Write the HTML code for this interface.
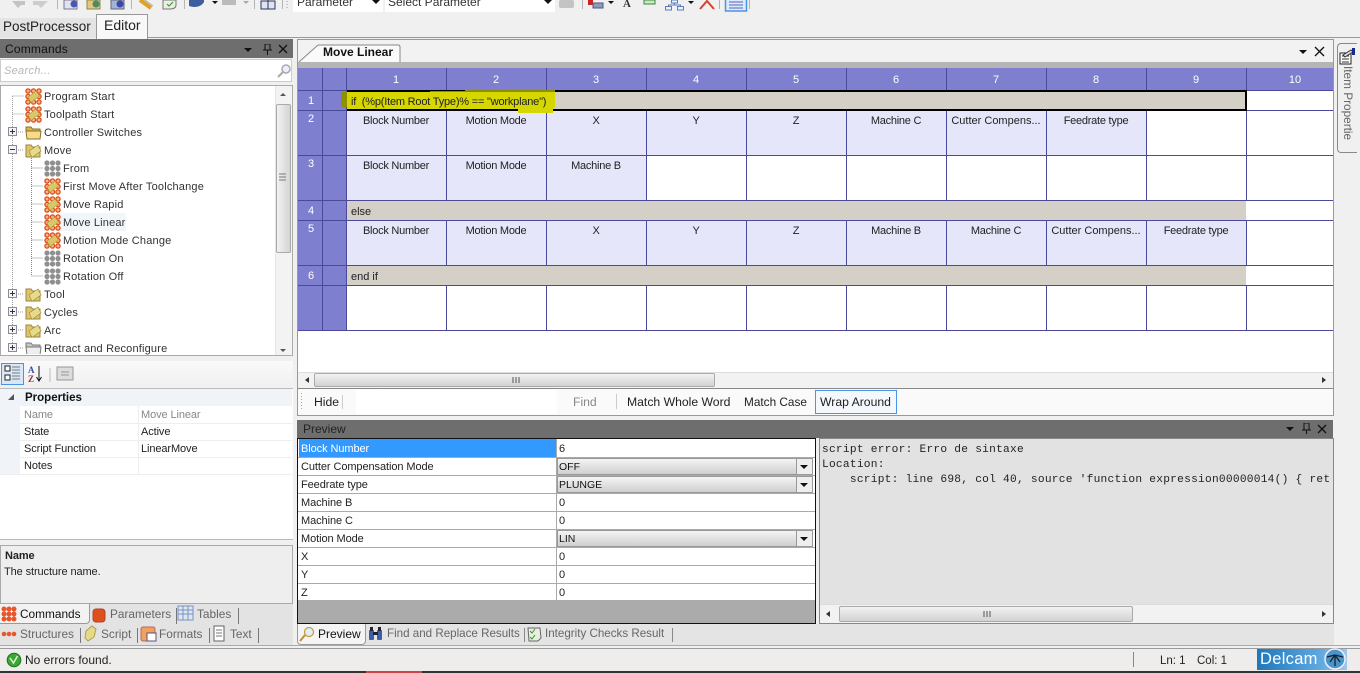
<!DOCTYPE html>
<html><head><meta charset="utf-8"><title>PostProcessor Editor</title>
<style>
html,body{margin:0;padding:0}
body{width:1360px;height:673px;overflow:hidden;position:relative;background:#f0f0f0;font:12px "Liberation Sans",sans-serif;color:#111}
div,span.a,svg.a{position:absolute;box-sizing:border-box}
.t{white-space:nowrap;line-height:16px;height:16px}
.cell{position:absolute;box-sizing:border-box;text-align:center;white-space:nowrap;overflow:hidden;line-height:16px;padding-top:3px;font-size:11px;letter-spacing:-.25px;color:#222;margin-left:-1px}
.h{color:#fff;text-align:center;line-height:16px;font-size:11px;margin-left:-1px}
.rn{color:#fff;text-align:center;line-height:16px;font-size:11px;left:299px;width:24px}
.tr{font-size:11px;color:#333;white-space:nowrap;line-height:16px;height:16px;letter-spacing:.18px;margin-top:1px}
.p{font-size:11px;white-space:nowrap;line-height:16px;height:16px;color:#222;margin-top:1px;letter-spacing:-.1px}
.pt{font-size:11px;white-space:nowrap;line-height:16px;height:16px;color:#222;margin-top:1px;letter-spacing:-.08px}
.combo{background:linear-gradient(#f4f4f4,#cfcfcf);border:1px solid #999;height:17px;left:557px;width:256px;font-size:10.5px;line-height:16px;padding-left:1px}
.combo b{position:absolute;right:0;top:0;width:15px;height:15px;background:#eee;border-left:1px solid #999}
.combo b:after{content:"";position:absolute;left:3px;top:6px;border:4px solid transparent;border-top:4px solid #111;border-bottom:0}
.ln{background:#aaa;height:1px}
.m{font:11.2px "Liberation Mono",monospace;white-space:pre;line-height:15px;color:#222;letter-spacing:.25px}
.tab{font-size:11.85px;color:#666;white-space:nowrap;line-height:16px;height:16px}
.sep{width:1px;background:#888}
</style></head><body>
<svg width="0" height="0" style="position:absolute">
<defs>
<g id="gr"><g fill="#8f8f8f"><circle cx="3" cy="3" r="2.600"/><circle cx="8.500" cy="3" r="2.600"/><circle cx="14" cy="3" r="2.600"/><circle cx="3" cy="8.500" r="2.600"/><circle cx="8.500" cy="8.500" r="2.600"/><circle cx="14" cy="8.500" r="2.600"/><circle cx="3" cy="14" r="2.600"/><circle cx="8.500" cy="14" r="2.600"/><circle cx="14" cy="14" r="2.600"/></g></g>
<g id="or"><g fill="#f3b48e" stroke="#df4f18" stroke-width="1.300"><circle cx="3" cy="3" r="2.100"/><circle cx="8.500" cy="3" r="2.100"/><circle cx="14" cy="3" r="2.100"/><circle cx="3" cy="8.500" r="2.100"/><circle cx="14" cy="8.500" r="2.100"/><circle cx="3" cy="14" r="2.100"/><circle cx="8.500" cy="14" r="2.100"/><circle cx="14" cy="14" r="2.100"/></g><path d="M3 9 L11 3 L14.500 8 L6 14.500Z" fill="#d8c86a" stroke="#a89a40" stroke-width=".6"/></g>
<g id="fo"><path d="M1 3h5l1.500 2h7.500v10H1Z" fill="#e0c468" stroke="#9a8440"/><path d="M4 9 L13 3 L16 9 L7 15.500Z" fill="#e6da8c" stroke="#a08c32" stroke-width=".7"/></g>
<g id="fy"><path d="M1 3h5l1.500 2h7.500v2H1Z" fill="#d9b24a" stroke="#8a7030"/><path d="M1 7h15l-1 8H2Z" fill="#f5dc88" stroke="#8a7030"/></g>
<g id="fg"><path d="M1 3h5l1.500 2h7.500v2H1Z" fill="#c8c8c8" stroke="#777"/><path d="M1 7h15l-1 8H2Z" fill="#eee" stroke="#777"/></g>
<g id="pl"><rect x=".5" y=".5" width="8" height="8" fill="#f4f4f4" stroke="#8a8a9a"/><path d="M2 4.500h5M4.500 2v5" stroke="#334" fill="none"/></g>
<g id="mi"><rect x=".5" y=".5" width="8" height="8" fill="#f4f4f4" stroke="#8a8a9a"/><path d="M2 4.500h5" stroke="#334" fill="none"/></g>
<g id="ctl"><path d="M0 0h8l-4 4z" fill="#111"/><path d="M21 -4h5v6h-5zM19 2h9M23.500 2v5" fill="none" stroke="#111"/><path d="M35 -3l8 8M43 -3l-8 8" stroke="#111" stroke-width="1.300"/></g>
</defs></svg>

<!-- top toolbar -->
<svg class="a" style="left:0;top:0" width="820" height="14">
<path d="M12 1h13v4h-4l-3 3z" fill="#c4c4c4"/><path d="M48 1H33v4h5l3 3z" fill="#cdcdcd"/>
<path d="M57.500 0v9M131.500 0v9M184.500 0v9M254.500 0v9M282.500 0v9" stroke="#b5b5b5"/>
<rect x="64" y="0" width="13" height="9" fill="#dfe3f0" stroke="#778"/><circle cx="74" cy="4" r="3.500" fill="#4a56b8"/>
<rect x="87" y="0" width="13" height="9" fill="#e2c878" stroke="#885"/><circle cx="96" cy="4" r="3.500" fill="#4a8a68"/>
<rect x="111" y="0" width="13" height="9" fill="#a4b4d8" stroke="#667"/><circle cx="120" cy="4" r="3.500" fill="#3a48a8"/>
<path d="M140 0l11 8" stroke="#e0a020" stroke-width="4"/><path d="M140 0l11 8" stroke="#aaa" stroke-width="1" transform="translate(2,-2)"/>
<path d="M163 0h13v5c0 3-3 4-6 4h-7z" fill="#e8eee0" stroke="#777"/><path d="M167 4l2 2 4-4" stroke="#2a9a2a" fill="none"/>
<path d="M189 0h15v2c-3 5-9 6-15 4z" fill="#3a5f9c"/><path d="M212 1h6l-3 3z" fill="#111"/><rect x="222" y="0" width="14" height="5" fill="#bbb"/><path d="M243 1h6l-3 3z" fill="#aaa"/>
<rect x="261" y="1" width="14" height="8" fill="#dde4f4" stroke="#335"/><path d="M268 0v9" stroke="#335"/>
<path d="M287 1v8" stroke="#999" stroke-dasharray="1 2"/>
<rect x="559" y="0" width="15" height="8" rx="2" fill="#c4c4c4"/><path d="M582.500 0v9M719.500 0v9M749.500 0v9" stroke="#b5b5b5"/>
<path d="M588 0h5v5h-5z" fill="#c22"/><rect x="593" y="3" width="10" height="5" fill="#8a9ac0" stroke="#557"/><path d="M608 1h6l-3 3z" fill="#111"/>
<text x="623" y="7" font-size="11" font-weight="bold" font-family="Liberation Serif" fill="#333">A</text>
<rect x="644" y="0" width="11" height="4" fill="#cfe6c8" stroke="#3a8a3a"/>
<path d="M665.500 6.500h6v3.500h-6zM677.500 6.500h6v3.500h-6zM671.500 0h6v3h-6zM674.500 3v2M668.500 6v-1h12v1" fill="none" stroke="#5a7ec0"/><path d="M688 1h6l-3 3z" fill="#111"/>
<path d="M700 9l7-8 7 8" fill="none" stroke="#d8412c" stroke-width="2"/>
<rect x="725.500" y="-2" width="21" height="13" fill="#dcebfb" stroke="#4a94e8" stroke-width="1.500"/><path d="M729 2h14M729 5h14M729 8h14" stroke="#5a62b8"/>
</svg>
<div style="left:293px;top:0;width:90px;height:12px;background:#fff"></div>
<div style="left:385px;top:0;width:170px;height:12px;background:#fff"></div>
<div class="t" style="left:297px;top:-6px;font-size:12px;color:#333">Parameter</div>
<div class="t" style="left:388px;top:-6px;font-size:12px;color:#333">Select Parameter</div>
<svg class="a" style="left:372px;top:0" width="180" height="6"><path d="M0 0h8l-4 4zM172 0h8l-4 4z" fill="#111"/></svg>

<!-- app tabs -->
<div style="left:0;top:37px;width:1360px;height:1px;background:#999"></div>
<div style="left:0;top:18px;width:97px;height:20px;background:#e4e4e4"></div>
<div class="t" style="left:3px;top:19px;font-size:13.500px;color:#222">PostProcessor</div>
<div style="left:96px;top:14px;width:52px;height:25px;background:#f8f8f8;border:1px solid #999;border-bottom:0"></div>
<div class="t" style="left:104px;top:17px;font-size:14px;color:#222">Editor</div>

<!-- Commands panel -->
<div style="left:0;top:39px;width:293px;height:19px;background:#6e6e6e"></div>
<div class="t" style="left:5px;top:41px;font-size:12px;color:#111;letter-spacing:.2px">Commands</div>
<svg class="a" style="left:244px;top:44px" width="50" height="12"><use href="#ctl" y="4"/></svg>
<div style="left:0;top:59px;width:292px;height:23px;background:#fff;border:1px solid #ccc"></div>
<div class="t" style="left:4px;top:63px;font-size:11px;font-style:italic;color:#b5b5b5;letter-spacing:.3px">Search...</div>
<svg class="a" style="left:276px;top:63px" width="16" height="16"><circle cx="10" cy="6" r="4" fill="#eef" stroke="#aaa" stroke-width="1.500"/><path d="M7 9l-5 5" stroke="#aaa" stroke-width="2"/></svg>
<div style="left:0;top:85px;width:293px;height:271px;background:#fff;border:1px solid #aaa"></div>
<svg class="a" style="left:0;top:86px" width="64" height="268">
<path d="M12.500 10v252M12.500 10h12M12.500 28h12M18 46h6M18 64h6M18 208h6M18 226h6M18 244h6M18 262h6" stroke="#999" stroke-dasharray="1 1" fill="none"/>
<path d="M31.500 72v118M31.500 82h12M31.500 100h12M31.500 118h12M31.500 136h12M31.500 154h12M31.500 172h12M31.500 190h12" stroke="#888" stroke-dasharray="1 1" fill="none"/>
<use href="#or" x="25" y="2"/><use href="#or" x="25" y="20"/>
<use href="#fy" x="25" y="38"/><use href="#pl" x="8" y="41"/>
<use href="#fo" x="25" y="56"/><use href="#mi" x="8" y="59"/>
<use href="#gr" x="44" y="74"/><use href="#or" x="44" y="92"/><use href="#or" x="44" y="110"/><use href="#or" x="44" y="128"/><use href="#or" x="44" y="146"/><use href="#gr" x="44" y="164"/><use href="#gr" x="44" y="182"/>
<use href="#fo" x="25" y="200"/><use href="#pl" x="8" y="203"/>
<use href="#fo" x="25" y="218"/><use href="#pl" x="8" y="221"/>
<use href="#fo" x="25" y="236"/><use href="#pl" x="8" y="239"/>
<use href="#fg" x="25" y="254"/><use href="#pl" x="8" y="257"/>
</svg>
<div style="left:61px;top:213px;width:65px;height:18px;background:#f1f6fb"></div>
<div class="tr" style="left:44px;top:88px">Program Start</div>
<div class="tr" style="left:44px;top:106px">Toolpath Start</div>
<div class="tr" style="left:44px;top:124px">Controller Switches</div>
<div class="tr" style="left:44px;top:142px">Move</div>
<div class="tr" style="left:63px;top:160px">From</div>
<div class="tr" style="left:63px;top:178px">First Move After Toolchange</div>
<div class="tr" style="left:63px;top:196px">Move Rapid</div>
<div class="tr" style="left:63px;top:214px">Move Linear</div>
<div class="tr" style="left:63px;top:232px">Motion Mode Change</div>
<div class="tr" style="left:63px;top:250px">Rotation On</div>
<div class="tr" style="left:63px;top:268px">Rotation Off</div>
<div class="tr" style="left:44px;top:286px">Tool</div>
<div class="tr" style="left:44px;top:304px">Cycles</div>
<div class="tr" style="left:44px;top:322px">Arc</div>
<div class="tr" style="left:44px;top:340px">Retract and Reconfigure</div>
<div style="left:275px;top:86px;width:17px;height:269px;background:#f3f3f3;border-left:1px solid #e4e4e4"></div>
<div style="left:276px;top:104px;width:15px;height:149px;background:linear-gradient(90deg,#f2f2f2,#d4d4d4);border:1px solid #aaa;border-radius:2px"></div>
<svg class="a" style="left:278px;top:92px" width="12" height="262"><path d="M2 4l3-3 3 3z" fill="#555"/><path d="M2 257l3 3 3-3z" fill="#555"/><path d="M1 82h7M1 85h7M1 88h7" stroke="#777"/></svg>

<!-- property toolbar -->
<div style="left:0;top:361px;width:293px;height:27px;background:linear-gradient(#fafafa,#efefef)"></div>
<div style="left:1px;top:363px;width:23px;height:22px;background:#d8e8f8;border:1px solid #4a94e8"></div>
<svg class="a" style="left:3px;top:364px" width="76" height="20">
<rect x="2" y="2" width="5" height="5" fill="#fff" stroke="#222"/><rect x="2" y="11" width="5" height="5" fill="#fff" stroke="#222"/><path d="M9 3h8M9 6h8M9 9h8M9 12h8M9 15h8" stroke="#777"/>
<text x="25" y="9" font-size="9" font-weight="bold" fill="#3552a8" font-family="Liberation Serif">A</text><text x="25" y="18" font-size="9" font-weight="bold" fill="#9e2c2c" font-family="Liberation Serif">Z</text><path d="M36 2v14M33.500 13l2.500 4 2.500-4" stroke="#111" fill="none"/>
<path d="M47 4v14" stroke="#bbb"/><rect x="54" y="3" width="16" height="13" fill="#dcdcdc" stroke="#999"/><path d="M58 8h8M58 11h8" stroke="#999"/>
</svg>
<div style="left:0;top:388px;width:293px;height:152px;background:#fff;border:1px solid #bbb;border-width:1px 0 1px 0"></div>
<div style="left:0;top:389px;width:292px;height:17px;background:#f0f4f8"></div>
<div style="left:0;top:389px;width:20px;height:85px;background:#f0f4f8"></div>
<svg class="a" style="left:8px;top:393px" width="8" height="8"><path d="M6 1v6H0z" fill="#555"/></svg>
<div class="p" style="left:25px;top:389px;font-weight:bold;color:#111;font-size:11.500px;letter-spacing:0">Properties</div>
<div class="ln" style="left:20px;top:423px;width:272px;background:#eee"></div>
<div class="ln" style="left:20px;top:440px;width:272px;background:#eee"></div>
<div class="ln" style="left:20px;top:457px;width:272px;background:#eee"></div>
<div class="ln" style="left:0;top:474px;width:292px;background:#eee"></div>
<div style="left:138px;top:406px;width:1px;height:68px;background:#eee"></div>
<div class="p" style="left:24px;top:406px;color:#888">Name</div><div class="p" style="left:141px;top:406px;color:#888">Move Linear</div>
<div class="p" style="left:24px;top:423px">State</div><div class="p" style="left:141px;top:423px">Active</div>
<div class="p" style="left:24px;top:440px">Script Function</div><div class="p" style="left:141px;top:440px">LinearMove</div>
<div class="p" style="left:24px;top:457px">Notes</div>

<div style="left:0;top:545px;width:293px;height:59px;background:#eee;border:1px solid #aaa"></div>
<div class="p" style="left:5px;top:547px;font-weight:bold">Name</div>
<div class="p" style="left:4px;top:563px">The structure name.</div>

<!-- left tabs -->
<div style="left:0;top:604px;width:293px;height:41px;background:#e3e3e3"></div>
<div style="left:0;top:604px;width:90px;height:20px;background:#f2f2f2;border:1px solid #999;border-width:0 1px 1px 0;border-radius:0 0 4px 0"></div>
<svg class="a" style="left:0;top:604px" width="293" height="41">
<g fill="#e8562a" transform="translate(1,2)"><circle cx="3" cy="3" r="2.500"/><circle cx="8" cy="3" r="2.500"/><circle cx="13" cy="3" r="2.500"/><circle cx="3" cy="8" r="2.500"/><circle cx="8" cy="8" r="2.500"/><circle cx="13" cy="8" r="2.500"/><circle cx="3" cy="13" r="2.500"/><circle cx="8" cy="13" r="2.500"/><circle cx="13" cy="13" r="2.500"/></g>
<rect x="93" y="5" width="12" height="13" rx="3" fill="#e0501c" stroke="#a43"/>
<rect x="178" y="2" width="15" height="14" fill="#dfe6f2" stroke="#7a92c4"/><path d="M178 6h15M178 10h15M183 2v14M188 2v14" stroke="#7a92c4"/>
<path d="M176.500 4v16M238.500 4v16" stroke="#777"/>
<g fill="#e8562a"><circle cx="4" cy="30" r="2.300"/><circle cx="9" cy="30" r="2.300"/><circle cx="14" cy="30" r="2.300"/></g>
<path d="M86 27l6-5 4 3-2 8-6 4-3-3z" fill="#e4d98c" stroke="#b0a040"/>
<rect x="141" y="23" width="14" height="14" rx="2" fill="#f0a060" stroke="#b66"/><rect x="147" y="29" width="9" height="8" fill="#fff" stroke="#557"/>
<rect x="214" y="22" width="10" height="15" fill="#fff" stroke="#666"/><path d="M216 26h6M216 29h6M216 32h6" stroke="#777"/>
<path d="M80.500 24v15M137.500 24v15M209.500 24v15M258.500 24v15" stroke="#777"/>
</svg>
<div class="tab" style="left:20px;top:606px;color:#111">Commands</div>
<div class="tab" style="left:110px;top:606px">Parameters</div>
<div class="tab" style="left:197px;top:606px">Tables</div>
<div class="tab" style="left:20px;top:626px">Structures</div>
<div class="tab" style="left:101px;top:626px">Script</div>
<div class="tab" style="left:159px;top:626px">Formats</div>
<div class="tab" style="left:230px;top:626px">Text</div>

<!-- main editor -->
<div style="left:297px;top:39px;width:1037px;height:377px;background:#f2f2f2;border:1px solid #999"></div>
<svg class="a" style="left:298px;top:44px" width="104" height="20"><path d="M1 18L20 1H100Q102 1 102 3V18" fill="#fafafa" stroke="#888"/></svg>
<div class="t" style="left:323px;top:44px;font-weight:bold;font-size:12px;color:#111">Move Linear</div>
<svg class="a" style="left:1299px;top:46px" width="30" height="12"><path d="M0 4h8l-4 4z" fill="#111"/><path d="M16 1l9 9M25 1l-9 9" stroke="#111" stroke-width="1.300"/></svg>
<div style="left:298px;top:62px;width:1035px;height:6px;background:#b5b5b5"></div>
<div style="left:298px;top:68px;width:1035px;height:304px;background:#fff"></div>
<!-- grid headers -->
<div style="left:298px;top:68px;width:1035px;height:23px;background:#7f7fcf"></div>
<div style="left:298px;top:68px;width:49px;height:262px;background:#7f7fcf"></div>
<!-- data cell bg -->
<div style="left:347px;top:110px;width:799px;height:45px;background:#e6e6fb"></div>
<div style="left:347px;top:155px;width:299px;height:45px;background:#e6e6fb"></div>
<div style="left:347px;top:220px;width:899px;height:45px;background:#e6e6fb"></div>
<div style="left:347px;top:200px;width:899px;height:20px;background:#d4d0c8"></div>
<div style="left:347px;top:265px;width:899px;height:20px;background:#d4d0c8"></div>
<div style="left:347px;top:91px;width:899px;height:19px;background:#d4d0c8"></div>
<svg class="a" style="left:298px;top:68px" width="1035" height="263">
<g stroke="#4a4a9c" fill="none">
<path d="M0 22.500H1035M0 42.500H1035M0 87.500H1035M0 132.500H1035M0 152.500H1035M0 197.500H1035M0 217.500H1035M0 262.500H1035"/>
<path d="M24.500 0V263M48.500 0V263M148.500 0V23M248.500 0V23M348.500 0V23M448.500 0V23M548.500 0V23M648.500 0V23M748.500 0V23M848.500 0V23M948.500 0V23"/>
<path d="M148.500 43V133M248.500 43V133M348.500 43V133M448.500 43V133M548.500 43V133M648.500 43V133M748.500 43V133M848.500 43V133M948.500 43V133"/>
<path d="M148.500 153V198M248.500 153V198M348.500 153V198M448.500 153V198M548.500 153V198M648.500 153V198M748.500 153V198M848.500 153V198M948.500 153V198"/>
<path d="M148.500 218V263M248.500 218V263M348.500 218V263M448.500 218V263M548.500 218V263M648.500 218V263M748.500 218V263M848.500 218V263M948.500 218V263"/>
</g>
<rect x="50" y="23" width="898" height="19" fill="none" stroke="#000" stroke-width="2"/>
</svg>
<!-- highlight -->
<svg class="a" style="left:341px;top:88px" width="220" height="28">
<path d="M0 4H6V19H0ZM89 3H124V2H214V5H89Z" fill="#8f8f00"/>
<path d="M6 4H214V19L212 21V25H177V21H6Z" fill="#d6d600"/>
</svg>
<div class="h" style="left:347px;top:72px;width:100px">1</div><div class="h" style="left:447px;top:72px;width:100px">2</div><div class="h" style="left:547px;top:72px;width:100px">3</div><div class="h" style="left:647px;top:72px;width:100px">4</div><div class="h" style="left:747px;top:72px;width:100px">5</div><div class="h" style="left:847px;top:72px;width:100px">6</div><div class="h" style="left:947px;top:72px;width:100px">7</div><div class="h" style="left:1047px;top:72px;width:100px">8</div><div class="h" style="left:1147px;top:72px;width:100px">9</div><div class="h" style="left:1247px;top:72px;width:98px">10</div>
<div class="rn" style="top:93px">1</div><div class="rn" style="top:111px">2</div><div class="rn" style="top:156px">3</div><div class="rn" style="top:203px">4</div><div class="rn" style="top:221px">5</div><div class="rn" style="top:268px">6</div>
<div class="t" style="left:351px;top:94px;font-size:11px;letter-spacing:-.2px;color:#222">if&nbsp; (%p(Item Root Type)% == "workplane")</div>
<div class="t" style="left:351px;top:204px;font-size:11px;color:#222">else</div>
<div class="t" style="left:351px;top:269px;font-size:11px;color:#222">end if</div>

<div class="cell" style="left:347px;top:110px;width:100px">Block Number</div><div class="cell" style="left:447px;top:110px;width:100px">Motion Mode</div><div class="cell" style="left:547px;top:110px;width:100px">X</div><div class="cell" style="left:647px;top:110px;width:100px">Y</div><div class="cell" style="left:747px;top:110px;width:100px">Z</div><div class="cell" style="left:847px;top:110px;width:100px">Machine C</div><div class="cell" style="left:947px;top:110px;width:100px;letter-spacing:0">Cutter Compens...</div><div class="cell" style="left:1047px;top:110px;width:100px">Feedrate type</div>
<div class="cell" style="left:347px;top:155px;width:100px">Block Number</div><div class="cell" style="left:447px;top:155px;width:100px">Motion Mode</div><div class="cell" style="left:547px;top:155px;width:100px">Machine B</div>
<div class="cell" style="left:347px;top:220px;width:100px">Block Number</div><div class="cell" style="left:447px;top:220px;width:100px">Motion Mode</div><div class="cell" style="left:547px;top:220px;width:100px">X</div><div class="cell" style="left:647px;top:220px;width:100px">Y</div><div class="cell" style="left:747px;top:220px;width:100px">Z</div><div class="cell" style="left:847px;top:220px;width:100px">Machine B</div><div class="cell" style="left:947px;top:220px;width:100px">Machine C</div><div class="cell" style="left:1047px;top:220px;width:100px;letter-spacing:0">Cutter Compens...</div><div class="cell" style="left:1147px;top:220px;width:100px">Feedrate type</div>

<!-- editor h-scroll -->
<div style="left:298px;top:372px;width:1035px;height:17px;background:#f2f2f2;border-top:1px solid #ddd;border-bottom:1px solid #888"></div>
<div style="left:314px;top:373px;width:401px;height:14px;background:linear-gradient(#f2f2f2,#d2d2d2);border:1px solid #aaa;border-radius:2px"></div>
<svg class="a" style="left:303px;top:376px" width="1025" height="9"><path d="M6 1v6L2 4z" fill="#333"/><path d="M1019 1v6l4-3z" fill="#333"/><path d="M210 1v6M213 1v6M216 1v6" stroke="#555"/></svg>
<!-- find bar -->
<div style="left:298px;top:389px;width:1035px;height:26px;background:#fafafa"></div>
<div style="left:356px;top:390px;width:201px;height:24px;background:#fff"></div>
<svg class="a" style="left:300px;top:392px" width="4" height="20"><path d="M1.500 1v18" stroke="#aaa" stroke-dasharray="1 2"/></svg>
<div class="sep" style="left:342px;top:395px;height:14px;background:#ccc"></div>
<div class="t" style="left:314px;top:394px;font-size:12.200px;color:#222">Hide</div>
<div class="t" style="left:573px;top:394px;font-size:12.200px;color:#888">Find</div>
<div class="sep" style="left:616px;top:394px;height:15px;background:#ccc"></div>
<div class="t" style="left:627px;top:394px;font-size:12.200px;color:#222">Match Whole Word</div>
<div class="t" style="left:744px;top:394px;font-size:11.800px;color:#222">Match Case</div>
<div style="left:815px;top:390px;width:82px;height:24px;background:#f4f8fc;border:1px solid #4a94e8"></div>
<div class="t" style="left:820px;top:394px;font-size:12.200px;color:#222">Wrap Around</div>

<!-- preview panel -->
<div style="left:297px;top:420px;width:1036px;height:18px;background:#6e6e6e"></div>
<div class="t" style="left:303px;top:421px;font-size:12px;color:#222">Preview</div>
<svg class="a" style="left:1285px;top:423px" width="48" height="12"><path d="M1 4h8l-4 4z" fill="#111"/><path d="M19 0h5v7h-5zM17 7h9M21.500 7v4" fill="none" stroke="#111"/><path d="M33 2l8 8M41 2l-8 8" stroke="#111" stroke-width="1.300"/></svg>
<div style="left:297px;top:438px;width:519px;height:186px;background:#ababab;border:1px solid #111;border-top-width:1px"></div>
<div style="left:298px;top:439px;width:517px;height:162px;background:#fff"></div>
<div style="left:299px;top:439px;width:257px;height:18px;background:#3399ff"></div>
<div class="ln" style="left:298px;top:457px;width:517px"></div><div class="ln" style="left:298px;top:475px;width:517px"></div><div class="ln" style="left:298px;top:493px;width:517px"></div><div class="ln" style="left:298px;top:511px;width:517px"></div><div class="ln" style="left:298px;top:529px;width:517px"></div><div class="ln" style="left:298px;top:547px;width:517px"></div><div class="ln" style="left:298px;top:565px;width:517px"></div><div class="ln" style="left:298px;top:583px;width:517px"></div><div class="ln" style="left:298px;top:600px;width:517px"></div>
<div style="left:556px;top:439px;width:1px;height:162px;background:#aaa"></div>
<div class="pt" style="left:301px;top:440px;color:#fff">Block Number</div><div class="pt" style="left:559px;top:440px">6</div>
<div class="pt" style="left:301px;top:458px">Cutter Compensation Mode</div><div class="combo" style="top:458px">OFF<b></b></div>
<div class="pt" style="left:301px;top:476px">Feedrate type</div><div class="combo" style="top:476px">PLUNGE<b></b></div>
<div class="pt" style="left:301px;top:494px">Machine B</div><div class="pt" style="left:559px;top:494px">0</div>
<div class="pt" style="left:301px;top:512px">Machine C</div><div class="pt" style="left:559px;top:512px">0</div>
<div class="pt" style="left:301px;top:530px">Motion Mode</div><div class="combo" style="top:530px">LIN<b></b></div>
<div class="pt" style="left:301px;top:548px">X</div><div class="pt" style="left:559px;top:548px">0</div>
<div class="pt" style="left:301px;top:566px">Y</div><div class="pt" style="left:559px;top:566px">0</div>
<div class="pt" style="left:301px;top:584px">Z</div><div class="pt" style="left:559px;top:584px">0</div>

<!-- output text -->
<div style="left:819px;top:438px;width:515px;height:186px;background:#e2e2e2;border:1px solid #888;overflow:hidden"></div>
<div class="m" style="left:822px;top:443px;width:511px;overflow:hidden">script error: Erro de sintaxe
Location:
    script: line 698, col 40, source 'function expression00000014() { ret</div>
<div style="left:820px;top:604px;width:513px;height:19px;background:#f2f2f2;border-top:1px solid #ddd"></div>
<div style="left:839px;top:606px;width:294px;height:16px;background:linear-gradient(#f2f2f2,#d2d2d2);border:1px solid #aaa;border-radius:2px"></div>
<svg class="a" style="left:825px;top:610px" width="505" height="9"><path d="M5 1v6L1 4z" fill="#333"/><path d="M497 1v6l4-3z" fill="#333"/><path d="M159 1v6M162 1v6M165 1v6" stroke="#555"/></svg>

<!-- bottom tabs right -->
<div style="left:297px;top:624px;width:1037px;height:22px;background:#e4e4e4"></div>
<div style="left:297px;top:624px;width:69px;height:21px;background:#f4f4f4;border:1px solid #999;border-top:0;border-radius:0 0 4px 4px"></div>
<svg class="a" style="left:298px;top:625px" width="380" height="20">
<circle cx="11" cy="7" r="4.500" fill="#def" stroke="#c8a040" stroke-width="1.300"/><path d="M7 10L2 16" stroke="#c8902a" stroke-width="2"/>
<rect x="71" y="5" width="5" height="10" rx="1" fill="#3a5fa8"/><rect x="79" y="5" width="5" height="10" rx="1" fill="#3a5fa8"/><rect x="72" y="2" width="3" height="4" fill="#223"/><rect x="80" y="2" width="3" height="4" fill="#223"/><rect x="75" y="7" width="5" height="3" fill="#222"/>
<path d="M230 3h12l1 10-3 3h-9z" fill="#e8eee0" stroke="#666"/><path d="M232 6l2 2 3-4M232 12l2 2 3-4" stroke="#2a9a2a" fill="none"/>
<path d="M226.500 3v14M374.500 3v14" stroke="#888"/>
</svg>
<div class="tab" style="left:318px;top:626px;color:#111;font-size:12px">Preview</div>
<div class="tab" style="left:387px;top:626px;font-size:11.600px">Find and Replace Results</div>
<div class="tab" style="left:545px;top:626px;font-size:11.600px">Integrity Checks Result</div>

<!-- item props tab -->
<div style="left:1337px;top:43px;width:20px;height:110px;background:#f0f0f0;border:1px solid #888;border-right:0;border-radius:4px 0 0 4px"></div>
<svg class="a" style="left:1339px;top:47px" width="18" height="18"><rect x="1" y="6" width="11" height="11" fill="#fff" stroke="#222"/><path d="M3 9h7M3 12h7M3 15h7" stroke="#333"/><path d="M4 8l8-5 2 2-8 5z" fill="#ddd" stroke="#333"/><rect x="13" y="1" width="3" height="7" fill="#1a2a8a"/></svg>
<div class="t" style="left:1340px;top:66px;transform-origin:0 0;transform:translate(16px,0) rotate(90deg);font-size:11.800px;color:#666;width:80px;overflow:hidden">Item Propertie</div>

<!-- status bar -->
<div style="left:0;top:645px;width:1360px;height:1px;background:#aaa"></div>
<div style="left:0;top:648px;width:1360px;height:1px;background:#999"></div>
<div style="left:0;top:649px;width:1360px;height:22px;background:#efecec"></div>
<div style="left:0;top:671px;width:1360px;height:2px;background:#333"></div>
<div style="left:366px;top:671px;width:56px;height:2px;background:#c44"></div>
<svg class="a" style="left:6px;top:652px" width="16" height="16"><circle cx="8" cy="8" r="6.800" fill="#38a838" stroke="#1f6e1f"/><path d="M4 6l3.500 5 4-7" stroke="#dff5d0" stroke-width="1.500" fill="none"/></svg>
<div class="t" style="left:25px;top:652px;font-size:12px;color:#222">No errors found.</div>
<div style="left:1133px;top:652px;width:1px;height:15px;background:#888"></div>
<div class="t" style="left:1160px;top:653px;font-size:11.500px;color:#222">Ln: 1</div>
<div class="t" style="left:1197px;top:653px;font-size:11.500px;color:#222">Col: 1</div>
<div style="left:1257px;top:649px;width:90px;height:21px;background:linear-gradient(90deg,#1e78bc,#5fa8e0 70%,#9cc9ea)"></div>
<div class="t" style="left:1260px;top:650px;font-size:16.500px;line-height:19px;height:19px;color:#fff;letter-spacing:.3px">Delcam</div>
<svg class="a" style="left:1320px;top:648px" width="28" height="22"><circle cx="15" cy="11" r="10" fill="#4a94c8" stroke="#eef" stroke-width="1.500"/><path d="M15 7v11M15 7L7 9M15 7l8 2M15 7l-5 7M15 7l5 7" stroke="#123" stroke-width="1.300" fill="none"/></svg>
</body></html>
